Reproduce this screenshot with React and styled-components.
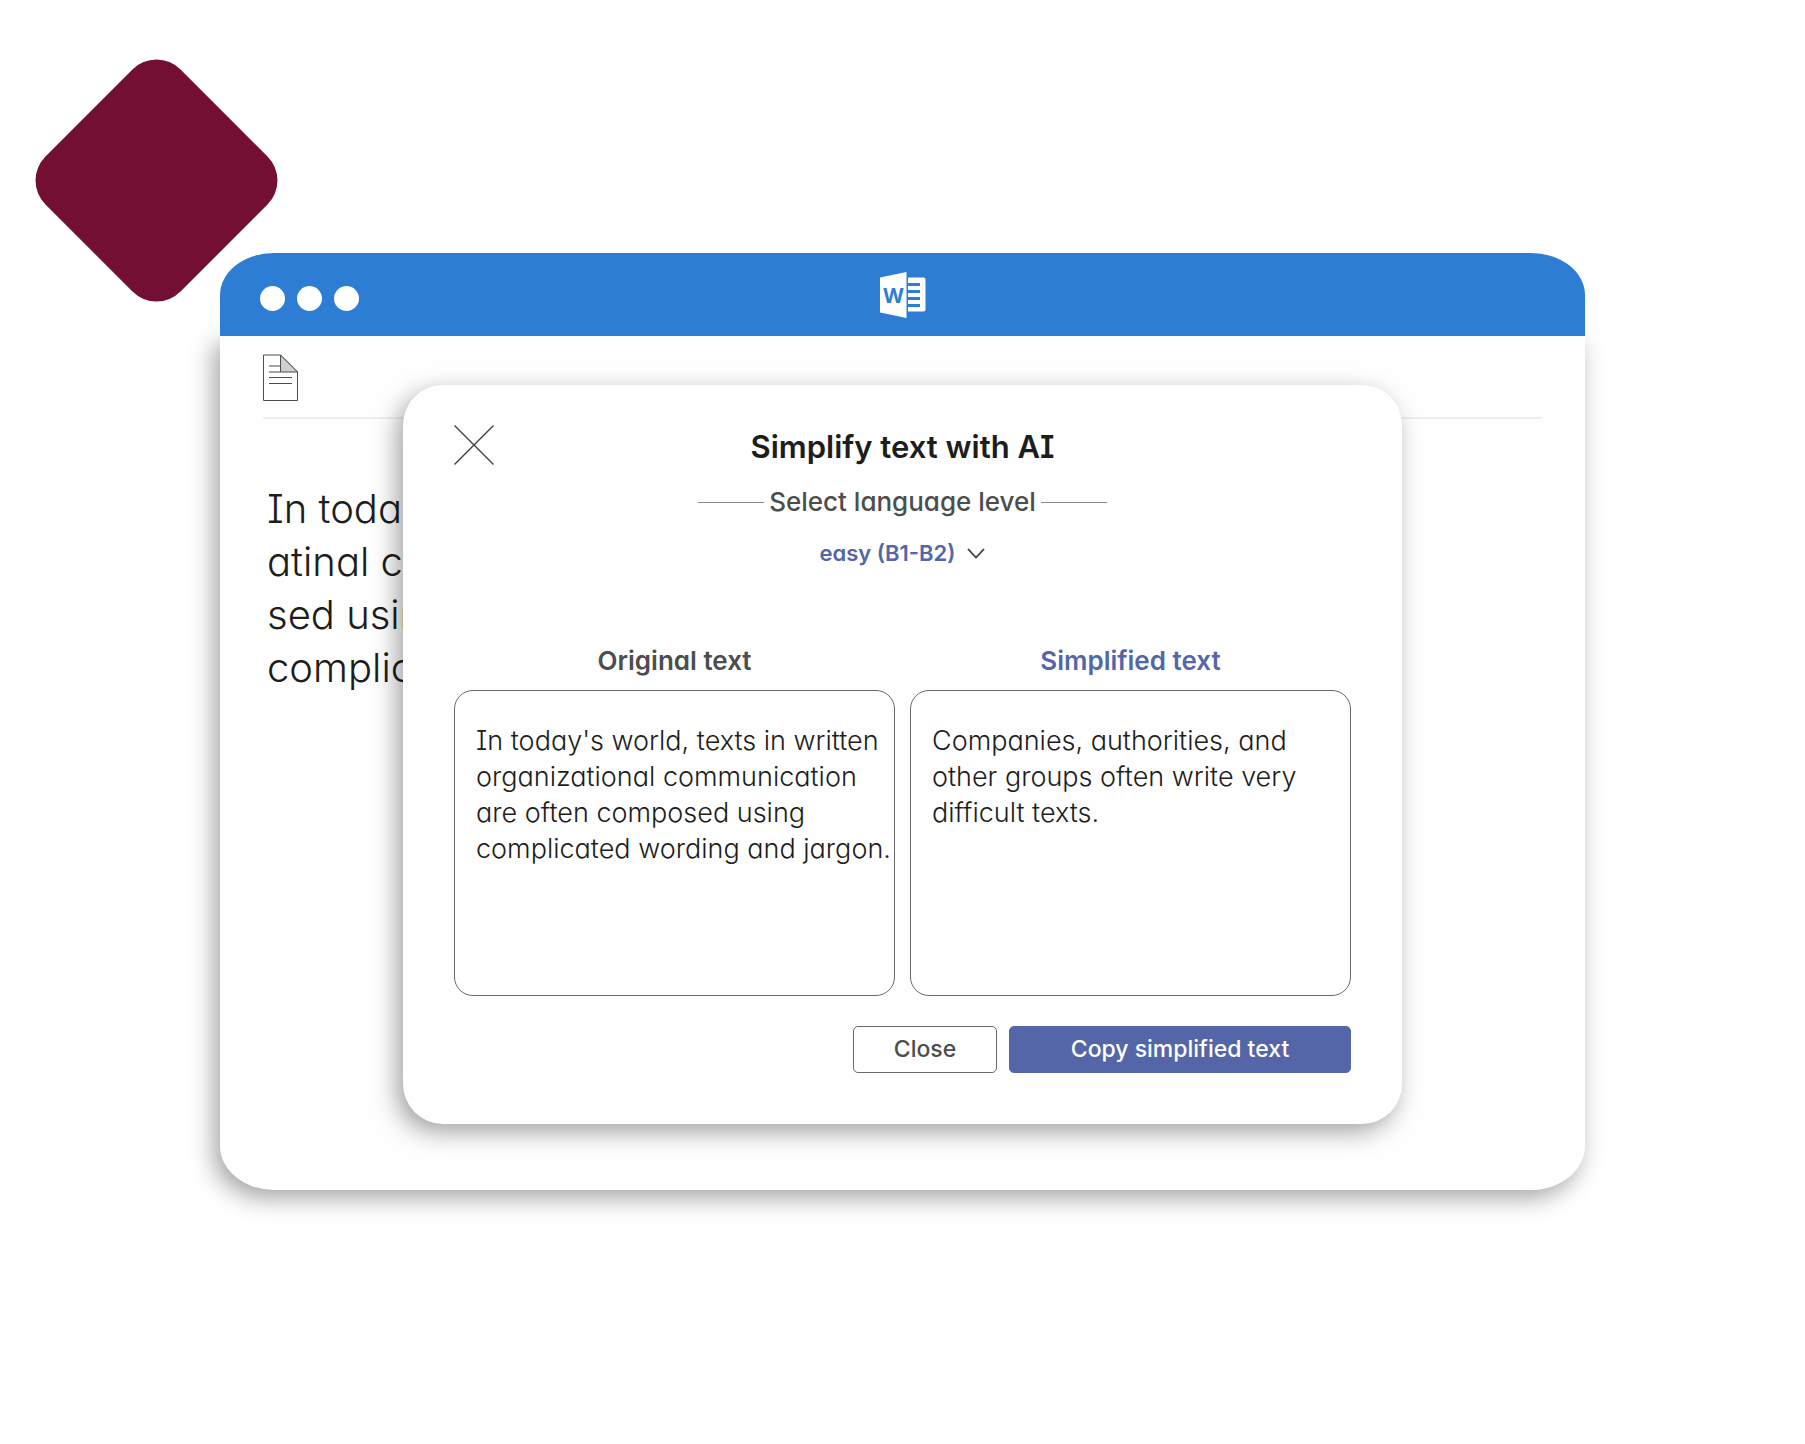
import { useState } from 'react';
import styled, { createGlobalStyle } from 'styled-components';

const GlobalStyle = createGlobalStyle`
	* {
		box-sizing: border-box;
	}
	body {
		margin: 0;
		background-color: #ffffff;
		color: #1d1d1b;
		font-family: Inter, "Open Sans", sans-serif;
		/* single-storey a and capital I with serifs */
		font-feature-settings: "cv11", "cv08";
	}
	button, select, textarea {
		font: inherit;
		font-feature-settings: inherit;
		color: inherit;
	}
`

const Page = styled.main`
	position: relative;
	min-height: 100vh;
	padding: 253px 220px;
`

const Diamond = styled.div`
	position: absolute;
	top: 85px;
	left: 61px;
	width: 191px;
	height: 191px;
	border-radius: 34px;
	background-color: #730f33;
	transform: rotate(45deg);
`

const Window = styled.div`
	position: relative;
	display: flex;
	flex-direction: column;
`

const TitleBar = styled.header`
	position: relative;
	z-index: 1;
	display: grid;
	grid-template-columns: 1fr auto 1fr;
	align-items: center;
	height: 83px;
	padding: 0 40px;
	border-radius: 54px 54px 0 0 / 42px 42px 0 0;
	background-color: #2d7dd5;
`

const Dots = styled.div`
	display: flex;
	gap: 12px;
	padding-top: 7px;

	span {
		width: 25px;
		height: 25px;
		border-radius: 50%;
		background-color: #fefefe;
	}
`

const Sheet = styled.div`
	min-height: 854px;
	padding: 18px 43px;
	border-radius: 0 0 54px 54px / 0 0 44px 44px;
	background-color: #fefefe;
	box-shadow: -6px 8px 24px rgba(0, 0, 0, 0.36);
`

const Toolbar = styled.div`
	display: flex;
	height: 65px;
	border-bottom: 2px solid #eeeeee;
`

const DocumentText = styled.p`
	margin: 0;
	padding: 63px 4px 0;
	font-size: 40px;
	font-weight: 300;
	line-height: 53px;
	white-space: pre-line;
`

const Dialog = styled.section`
	position: absolute;
	z-index: 2;
	top: 132px;
	left: 183px;
	right: 183px;
	padding: 40px 51px 51px;
	border-radius: 40px;
	background-color: #fefefe;
	box-shadow: -6px 8px 24px rgba(0, 0, 0, 0.36);
`

const DialogHeader = styled.div`
	display: grid;
	grid-template-columns: 40px 1fr 40px;
	align-items: start;
`

const IconButton = styled.button`
	display: flex;
	padding: 0;
	border: 0;
	background: none;
	cursor: pointer;
`

const Title = styled.h1`
	margin: 0;
	font-size: 31px;
	font-weight: 600;
	line-height: 44px;
	text-align: center;
`

const LevelLabel = styled.label`
	display: flex;
	align-items: center;
	justify-content: center;
	gap: 5px;
	margin-top: 17px;
	color: #4d4d4d;
	font-size: 26px;
	font-weight: 500;
	line-height: 32px;

	&::before, &::after {
		content: "";
		width: 66px;
		height: 1px;
		background-color: #8a8a8a;
	}
`

const LevelPicker = styled.div`
	display: grid;
	justify-content: center;
	align-items: center;
	margin-top: 19px;

	select, svg {
		grid-area: 1 / 1;
	}
	select {
		appearance: none;
		field-sizing: content;
		height: 32px;
		padding: 0 30px 0 0;
		border: 0;
		background: none;
		color: #5466a8;
		font-size: 22px;
		font-weight: 600;
		line-height: 32px;
		cursor: pointer;
	}
	svg {
		justify-self: end;
		pointer-events: none;
	}
`

const Panels = styled.div`
	display: grid;
	grid-template-columns: 1fr 1fr;
	gap: 15px;
	margin-top: 76px;
`

const Panel = styled.div`
	display: flex;
	flex-direction: column;
	gap: 13px;

	label {
		color: ${({ $accent }) => ($accent ? "#5466a8" : "#4d4d4d")};
		font-size: 26px;
		font-weight: 600;
		line-height: 32px;
		text-align: center;
	}
	textarea {
		width: 100%;
		height: 306px;
		padding: 32px 0 32px 21px;
		border: 1px solid #6a6a6a;
		border-radius: 19px;
		background: none;
		font-size: 27px;
		font-weight: 300;
		line-height: 36px;
		resize: none;
		overflow: hidden;
	}
`

const Actions = styled.div`
	display: flex;
	justify-content: flex-end;
	gap: 12px;
	margin-top: 30px;
`

const Button = styled.button`
	width: ${({ $primary }) => ($primary ? "342px" : "144px")};
	height: 47px;
	padding: 0 0 2px;
	border: 1px solid ${({ $primary }) => ($primary ? "#5466a8" : "#6a6a6a")};
	border-radius: 5px;
	background-color: ${({ $primary }) => ($primary ? "#5466a8" : "#fefefe")};
	color: ${({ $primary }) => ($primary ? "#fefefe" : "#4d4d4d")};
	font-size: 23px;
	font-weight: 500;
	line-height: 32px;
	cursor: pointer;
`

const WordIcon = () => (
	<svg width="46" height="46" viewBox="0 0 46 46" role="img" aria-label="Word">
		<path d="M28 5.5H43.5A2 2 0 0 1 45.5 7.5V37.5A2 2 0 0 1 43.5 39.5H28Z" fill="#fefefe" />
		<path d="M27 12.5H40M27 19.5H40M27 26.5H40M27 33.5H40" stroke="#2d7dd5" strokeWidth="3" />
		<path d="M0 5.5L26.5 0V46L0 40.5Z" fill="#fefefe" />
		<text
			x="13.5"
			y="31"
			fontFamily="Open Sans, sans-serif"
			fontSize="21"
			fontWeight="700"
			textAnchor="middle"
			fill="#2d7dd5"
		>W</text>
	</svg>
)

const DocumentIcon = () => (
	<svg width="36" height="48" viewBox="0 0 36 48" fill="none" stroke="#4d4d4d" aria-hidden="true">
		<path d="M0.5 1H17.5L34.5 18V46.5H0.5Z" />
		<path d="M17.5 1V18H34.5Z" fill="#cfcfcf" />
		<path d="M6 12H17.5M6 18H17.5M6 23.5H29M6 29.5H29" />
	</svg>
)

const App = () => {

	const [level, setLevel] = useState("easy");
	const [isOpen, setIsOpen] = useState(true);

	const simplified = "Companies, authorities, and\nother groups often write very\ndifficult texts.";

	const handleClose = () => {
		setIsOpen(false);
	}

	const handleCopy = () => {
		navigator.clipboard?.writeText(simplified);
	}

	return (
		<>
			<GlobalStyle />
			<Page>
				<Diamond />
				<Window>
					<TitleBar>
						<Dots>
							<span />
							<span />
							<span />
						</Dots>
						<WordIcon />
					</TitleBar>
					<Sheet>
						<Toolbar>
							<DocumentIcon />
						</Toolbar>
						<DocumentText>
							{"In today\natinal co\nsed using\ncomplica"}
						</DocumentText>
					</Sheet>
					{isOpen && (
						<Dialog role="dialog" aria-labelledby="dialog-title">
							<DialogHeader>
								<IconButton aria-label="Close dialog" onClick={handleClose}>
									<svg width="40" height="40" viewBox="0 0 40 40" stroke="#3c3c3b" strokeWidth="1.3">
										<path d="M0.5 0.5L39.5 39.5M39.5 0.5L0.5 39.5" />
									</svg>
								</IconButton>
								<Title id="dialog-title">Simplify text with AI</Title>
							</DialogHeader>
							<LevelLabel htmlFor="level">Select language level</LevelLabel>
							<LevelPicker>
								<select id="level" value={level} onChange={(e) => setLevel(e.target.value)}>
									<option value="easy">easy (B1-B2)</option>
								</select>
								<svg width="18" height="11" viewBox="0 0 18 11" fill="none" stroke="#3c3c3b" strokeWidth="1.8">
									<path d="M1 1L9 9.5L17 1" />
								</svg>
							</LevelPicker>
							<Panels>
								<Panel>
									<label htmlFor="original">Original text</label>
									<textarea
										id="original"
										spellCheck={false}
										defaultValue={"In today's world, texts in written\norganizational communication\nare often composed using\ncomplicated wording and jargon."}
									/>
								</Panel>
								<Panel $accent>
									<label htmlFor="simplified">Simplified text</label>
									<textarea id="simplified" readOnly value={simplified} />
								</Panel>
							</Panels>
							<Actions>
								<Button onClick={handleClose}>Close</Button>
								<Button $primary onClick={handleCopy}>Copy simplified text</Button>
							</Actions>
						</Dialog>
					)}
				</Window>
			</Page>
		</>
	)
}

export default App;
